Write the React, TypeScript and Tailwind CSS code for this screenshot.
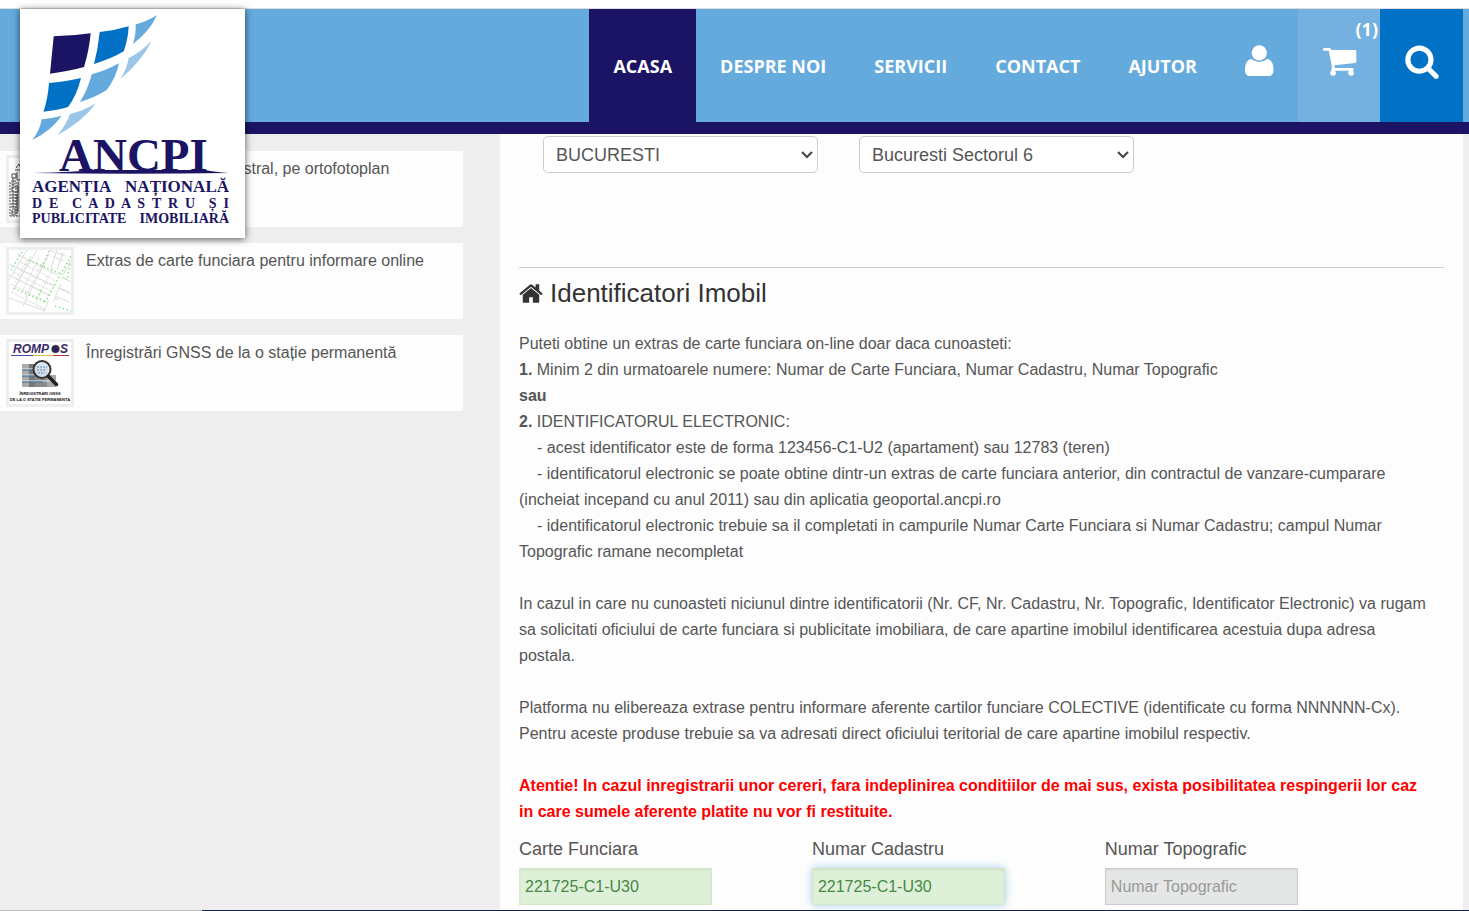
import type { ComponentProps } from "react"
import clsx from "clsx"

const NavItems = [
  { name: "ACASA", active: true },
  { name: "DESPRE NOI" },
  { name: "SERVICII" },
  { name: "CONTACT" },
  { name: "AJUTOR" },
]

const UserIcon = () => (
  <svg viewBox="0 0 29 32" className="h-8 w-[29px]" fill="currentColor" aria-hidden="true">
    <circle cx="14.3" cy="7.8" r="7.6" />
    <path d="M6.8 14.1 C8.500 15.800 11.200 16.900 14.3 16.900 C17.4 16.900 20 15.800 21.800 14.1 C26.500 14.200 28.5 19 28.5 25.2 C28.5 29 26.5 31 23.5 31 H5 C2 31 0 29 0 25.2 C0 19 2 14.200 6.8 14.1 Z" />
  </svg>
)

const CartIcon = () => (
  <svg viewBox="0 0 34 30" className="h-[30px] w-[34px]" fill="currentColor" aria-hidden="true">
    <path d="M1.2 1 H6.6 Q7.800 1 8.1 2.4 L8.3 3 H32.2 Q33.3 3 33.3 4.2 V14.8 Q33.3 15.900 32 16.1 L11.4 18.2 L11.9 20.9 H29.500 Q30.700 20.9 30.700 22.3 Q30.700 23.700 29.500 23.700 H9.500 Q8.300 23.700 8.300 22.500 L9 20 L5.8 3.8 H1.2 Q0 3.8 0 2.4 Q0 1 1.2 1 Z" />
    <path d="M9 23h2.500v3H9zM26.800 23h2.500v3h-2.500z" />
    <circle cx="10.1" cy="26" r="2.800" />
    <circle cx="28" cy="26" r="2.800" />
  </svg>
)

const SearchIcon = () => (
  <svg viewBox="0 0 1792 1792" className="size-9" fill="currentColor" aria-hidden="true">
    <path d="M1216 832q0-185-131.5-316.5t-316.5-131.5-316.5 131.5-131.5 316.5 131.5 316.5 316.5 131.5 316.5-131.5 131.5-316.5zm512 832q0 52-38 90t-90 38q-54 0-90-38l-343-342q-179 124-399 124-143 0-273.5-55.5t-225-150-150-225-55.5-273.5 55.5-273.5 150-225 225-150 273.5-55.5 273.5 55.5 225 150 150 225 55.5 273.5q0 220-124 399l343 343q37 37 37 90z" />
  </svg>
)

const HomeIcon = () => (
  <svg viewBox="64 160 1664 1400" className="h-5 w-6" fill="currentColor" aria-hidden="true">
    <path d="M1472 992v480q0 26-19 45t-45 19h-384v-384h-256v384h-384q-26 0-45-19t-19-45v-480q0-1 .5-3t.5-3l575-474 575 474q1 2 1 6zm223-69l-62 74q-8 9-21 11h-3q-13 0-21-7l-692-577-692 577q-12 8-24 7-13-2-21-11l-62-74q-8-10-7-23.5t11-21.5l719-599q32-26 76-26t76 26l244 204v-195q0-14 9-23t23-9h192q14 0 23 9t9 23v408l219 182q10 8 11 21.5t-7 23.5z" />
  </svg>
)

const Logo = () => (
  <a
    href="#"
    aria-label="ANCPI"
    className="absolute left-5 top-0 z-20 block w-[225px] bg-white pb-[11px] shadow-[0_1px_7px_rgba(0,0,0,0.65)]"
  >
    <svg viewBox="0 0 225 168" className="block w-full" aria-hidden="true">
      <path d="M33.7 27.3 Q52 27 70.7 24.3 Q69 42 64 58 Q49 62 30 64.7 Z" fill="#1b1464" />
      <path d="M79.7 23 Q95 21.5 108.7 17.3 Q108 31 103.7 42.3 Q93 49 74 55 Q78 40 79.7 23 Z" fill="#0071c5" />
      <path d="M115.7 15.3 Q127 12.5 137 6 Q130 22 113 35 Q116 26 115.7 15.3 Z" fill="#65aadd" />
      <path d="M29 74 Q44 73 61 69 Q57 86 48 98 Q38 101 23.5 102.7 Q28 89 29 74 Z" fill="#0071c5" />
      <path d="M71.7 65.3 Q85 62 99 54.3 Q96 69 86.7 81 Q76 88 60 93 Q68 80 71.7 65.3 Z" fill="#65aadd" />
      <path d="M108.7 49 Q121 43 131.7 31.7 Q122 52 100.3 70 Q107 60 108.7 49 Z" fill="#99c6e9" />
      <path d="M21.7 110.3 Q32 109.5 41.7 106.7 Q31 122 12.3 131 Q20 121 21.7 110.3 Z" fill="#65aadd" />
      <path d="M50 105 Q63 102 76 94.3 Q61 114 37.7 126 Q46 116 50 105 Z" fill="#99c6e9" />
      <text
        x="39"
        y="162"
        fontSize="47"
        fontWeight="700"
        fill="#1b1464"
        className="font-['Liberation_Serif',serif]"
      >
        ANCPI
      </text>
      <path d="M12 164 Q60 163 70 161 H185 Q195 163 209 164 Q110 165.5 12 164 Z" fill="#1b1464" />
    </svg>
    <div className="ml-3 mr-4 whitespace-pre font-['Liberation_Serif',serif] font-bold text-[#1b1464]">
      <div className="flex justify-between text-[17px] leading-5">
        <span>AGENȚIA</span>
        <span>NAȚIONALĂ</span>
      </div>
      <div className="flex justify-between text-[14px] leading-[14px]">
        <span>{"D  E"}</span>
        <span>{"C  A  D  A  S  T  R  U"}</span>
        <span>{"Ș  I"}</span>
      </div>
      <div className="flex justify-between text-[14px] leading-4">
        <span>PUBLICITATE</span>
        <span>IMOBILIARĂ</span>
      </div>
    </div>
  </a>
)

const PlanThumb = () => (
  <svg viewBox="0 0 62 62" className="size-full" fill="none" stroke="#444" aria-hidden="true">
    <path d="M7 10l3-4 2 4M6 12h6M3 16h4v4H3zM8 14v8h4M2 23h5M2 26h4M3 29h6v5H3zM9 24v30M12 20v36M2 37h6M2 40h7M3 43h5M2 46h6M2 49h5M3 52v5M6 50v7M8 36v20" />
    <path d="M1 24v34M4 20v38M7 24v34M1 58h10" strokeDasharray="2 1" />
  </svg>
)

const MapThumb = () => (
  <svg viewBox="0 0 62 62" className="size-full" fill="none" aria-hidden="true">
    <g stroke="#dcdcdc" strokeWidth="1">
      <path d="M0 14 L62 44 M0 25 L50 50 M8 4 L58 30 M0 48 L40 62 M28 0 L4 40 M40 4 L14 56 M62 10 L34 62 M52 26 L62 32 M18 0 L0 30" />
      <path
        d="M4 22 L44 42 M2 34 L42 54 M12 12 L48 32 M22 6 L8 34 M34 12 L16 48 M44 18 L26 54 M6 28 L40 46 M18 10 L6 32 M30 8 L12 44 M2 42 L38 60 M8 18 L46 37"
        strokeDasharray="3 1"
      />
      <path d="M40 0 L62 8 M44 6 L60 14 M48 0 L42 18 M54 2 L48 20 M50 38 L60 42 M46 46 L60 52 M52 34 L44 52" />
    </g>
    <path d="M60 2 L38 62" stroke="#fff" strokeWidth="4" />
    <path
      d="M13 2 L2 20 M40 1 L32 20 M20 10 L52 24 M62 6 L36 52 M5 38 L38 53 M32 40 L29 46 M61 14 L58 30 M46 56 L62 61"
      stroke="#7fe37f"
      strokeWidth="1.4"
      strokeDasharray="1.5 2.5"
    />
  </svg>
)

const RomposThumb = () => (
  <svg viewBox="0 0 62 62" className="size-full" aria-hidden="true">
    <g className="font-['Liberation_Sans',sans-serif]" fontWeight="700" fill="#3a2a68">
      <text x="4" y="11" fontSize="12" fontStyle="italic">
        ROMP
      </text>
      <text x="51" y="11" fontSize="12" fontStyle="italic">
        S
      </text>
    </g>
    <circle cx="46.5" cy="7" r="4" fill="#2c2358" stroke="#a08d3c" strokeDasharray="1 1" />
    <path d="M2 13.5h22" stroke="#4646a0" />
    <path d="M24 13.5h20" stroke="#d8c040" />
    <path d="M44 13.5h16" stroke="#b03050" />
    <path d="M13 22h13v23H13z" fill="#aaa" />
    <path d="M20 22h6v23h-6z" fill="#777" />
    <path d="M26 24h13v21H26z" fill="#8a8a8a" />
    <path d="M38 33h9v12h-9z" fill="#a8a8a8" />
    <path d="M13 27h13M13 33h13M13 39h34" stroke="#eee" />
    <path d="M13 28h12M13 34h13M13 40h21" stroke="#3c6ea0" />
    <circle cx="33" cy="27.5" r="8.5" fill="#dbe6ef" fillOpacity="0.9" stroke="#333" strokeWidth="2" />
    <path d="M28 25h10M28 28h9M29 31h7" stroke="#5b8fc0" strokeDasharray="2 1" />
    <path d="M39.500 34.500l8 8" stroke="#222" strokeWidth="3.5" strokeLinecap="round" />
    <g
      className="font-['Liberation_Sans',sans-serif]"
      fontWeight="700"
      fontSize="4"
      fill="#111"
      textAnchor="middle"
    >
      <text x="31" y="53">
        ÎNREGISTRĂRI GNSS
      </text>
      <text x="31" y="59">
        DE LA O STAȚIE PERMANENTĂ
      </text>
    </g>
  </svg>
)

const SideItems = [
  { title: "Extras din planul cadastral, pe ortofotoplan", Thumb: PlanThumb },
  { title: "Extras de carte funciara pentru informare online", Thumb: MapThumb },
  { title: "Înregistrări GNSS de la o stație permanentă", Thumb: RomposThumb },
]

const Header = () => (
  <header className="relative z-10 border-b-[12px] border-[#1b1464] bg-[#65aadd]">
    <Logo />
    <nav className="flex h-[113px] justify-end pr-1.5 font-['Open_Sans',sans-serif] text-lg font-bold text-white">
      {NavItems.map(({ name, active }) => (
        <a key={name} href="#" className={clsx("flex items-center px-6", active && "bg-[#1b1464]")}>
          {name}
        </a>
      ))}
      <a href="#" aria-label="Contul meu" className="px-6 pt-9">
        <UserIcon />
      </a>
      <a href="#" aria-label="Cos" className="relative w-[82px] bg-[#74b0e0] pl-[25px] pt-[38px]">
        <CartIcon />
        <span className="absolute right-0.5 top-1.5">(1)</span>
      </a>
      <button type="button" aria-label="Cauta" className="flex w-[83px] justify-center bg-[#0071c5] pt-[34px]">
        <SearchIcon />
      </button>
    </nav>
  </header>
)

const Select = (props: ComponentProps<"select">) => (
  <div className="relative w-[275px]">
    <select
      {...props}
      className="h-[37px] w-full appearance-none rounded-[5px] border border-[#ccc] bg-white px-3 text-lg leading-6"
    />
    <svg
      viewBox="0 0 12 8"
      className="pointer-events-none absolute right-[5px] top-[15px] h-2 w-3"
      fill="none"
      stroke="#444"
      strokeWidth="2"
      aria-hidden="true"
    >
      <path d="M1 1l5 5 5-5" />
    </svg>
  </div>
)

const Field = ({
  id,
  label,
  className,
  ...props
}: ComponentProps<"input"> & { label: string }) => (
  <div>
    <label htmlFor={id} className="block pb-1.5 text-lg leading-[26px]">
      {label}
    </label>
    <input id={id} className={clsx("block h-[37px] w-[66%] border px-[5px] text-base", className)} {...props} />
  </div>
)

const App = () => {
  return (
    <div className="flex min-h-screen flex-col bg-[#eee] font-['Liberation_Sans',Arial,sans-serif] text-base text-[#555]">
      <div className="h-[9px] border-b border-[#ddd] bg-white" />
      <Header />

      <div className="flex grow">
        <aside className="w-[500px] shrink-0 pr-[37px] pt-[17px]">
          <ul className="flex flex-col gap-4">
            {SideItems.map(({ title, Thumb }) => (
              <li key={title}>
                <a href="#" className="flex h-[76px] gap-3 bg-[#fdfdfd] py-1 pl-1.5">
                  <span className="size-[68px] shrink-0 border-[3px] border-[#eee] bg-white">
                    <Thumb />
                  </span>
                  <span className="leading-7">{title}</span>
                </a>
              </li>
            ))}
          </ul>
        </aside>

        <main className="mr-1.5 grow bg-[#fdfdfd] px-[19px] pt-0.5">
          <div className="flex gap-[41px] pb-[94px] pl-6">
            <Select aria-label="Judet">
              <option>BUCURESTI</option>
            </Select>
            <Select aria-label="Localitate">
              <option>Bucuresti Sectorul 6</option>
            </Select>
          </div>

          <h2 className="flex items-center gap-[7px] border-t border-[#ccc] pt-[9px] text-[26px] leading-8 text-[#333]">
            <HomeIcon />
            Identificatori Imobil
          </h2>

          <div className="pr-3 pt-[22px] leading-[26px]">
            <p>Puteti obtine un extras de carte funciara on-line doar daca cunoasteti:</p>
            <p>
              <b>1.</b> Minim 2 din urmatoarele numere: Numar de Carte Funciara, Numar Cadastru, Numar Topografic
            </p>
            <p>
              <b>sau</b>
            </p>
            <p>
              <b>2.</b> IDENTIFICATORUL ELECTRONIC:
            </p>
            <p className="indent-[18px]">- acest identificator este de forma 123456-C1-U2 (apartament) sau 12783 (teren)</p>
            <p className="indent-[18px]">
              - identificatorul electronic se poate obtine dintr-un extras de carte funciara anterior, din contractul de
              vanzare-cumparare (incheiat incepand cu anul 2011) sau din aplicatia geoportal.ancpi.ro
            </p>
            <p className="indent-[18px]">
              - identificatorul electronic trebuie sa il completati in campurile Numar Carte Funciara si Numar Cadastru;
              campul Numar Topografic ramane necompletat
            </p>
            <p className="pt-[26px]">
              In cazul in care nu cunoasteti niciunul dintre identificatorii (Nr. CF, Nr. Cadastru, Nr. Topografic,
              Identificator Electronic) va rugam sa solicitati oficiului de carte funciara si publicitate imobiliara, de
              care apartine imobilul identificarea acestuia dupa adresa postala.
            </p>
            <p className="pt-[26px]">
              Platforma nu elibereaza extrase pentru informare aferente cartilor funciare COLECTIVE (identificate cu
              forma NNNNNN-Cx). Pentru aceste produse trebuie sa va adresati direct oficiului teritorial de care
              apartine imobilul respectiv.
            </p>
            <p className="pt-[26px] font-bold text-[#f00]">
              Atentie! In cazul inregistrarii unor cereri, fara indeplinirea conditiilor de mai sus, exista
              posibilitatea respingerii lor caz in care sumele aferente platite nu vor fi restituite.
            </p>
          </div>

          <form className="grid w-[95%] grid-cols-3 pb-[5px] pt-[11px]">
            <Field
              id="carte-funciara"
              label="Carte Funciara"
              defaultValue="221725-C1-U30"
              className="border-[#d6e9c6] bg-[#dff0d8] text-[#468847] shadow-[inset_0_1px_2px_rgba(0,0,0,0.08)]"
            />
            <Field
              id="numar-cadastru"
              label="Numar Cadastru"
              defaultValue="221725-C1-U30"
              className="border-[#d6e9c6] bg-[#dff0d8] text-[#468847] shadow-[inset_0_1px_2px_rgba(0,0,0,0.08),0_0_8px_rgba(102,175,233,0.6)]"
            />
            <Field
              id="numar-topografic"
              label="Numar Topografic"
              placeholder="Numar Topografic"
              className="border-[#ccc] bg-[#e5e7e6] shadow-[inset_0_1px_2px_rgba(0,0,0,0.08)] placeholder:text-[#999]"
            />
          </form>
        </main>
      </div>

      {/* Thin strip closing the page */}
      <div className="flex h-px bg-[#16234a]">
        <div className="w-[202px] bg-[#bbb]" />
      </div>
    </div>
  )
}

export default App
